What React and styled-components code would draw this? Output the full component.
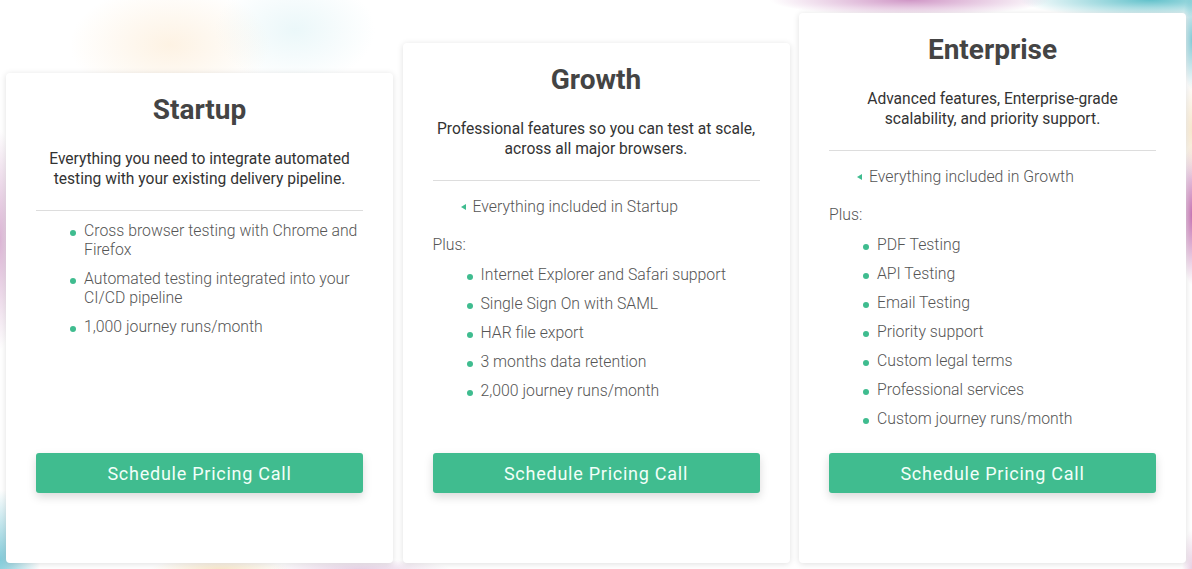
import React from "react";
import styled, { createGlobalStyle } from "styled-components";

const GlobalStyle = createGlobalStyle`
  html, body {
    margin: 0;
    padding: 0;
    background: #fff;
    font-family: Roboto, "Liberation Sans", sans-serif;
  }
`;

const plans = [
  {
    name: "Startup",
    offset: 60,
    description: "Everything you need to integrate automated testing with your existing delivery pipeline.",
    features: [
      "Cross browser testing with Chrome and Firefox",
      "Automated testing integrated into your CI/CD pipeline",
      "1,000 journey runs/month",
    ],
  },
  {
    name: "Growth",
    offset: 30,
    description: "Professional features so you can test at scale, across all major browsers.",
    inherits: "Everything included in Startup",
    features: [
      "Internet Explorer and Safari support",
      "Single Sign On with SAML",
      "HAR file export",
      "3 months data retention",
      "2,000 journey runs/month",
    ],
  },
  {
    name: "Enterprise",
    offset: 0,
    description: "Advanced features, Enterprise-grade scalability, and priority support.",
    inherits: "Everything included in Growth",
    features: [
      "PDF Testing",
      "API Testing",
      "Email Testing",
      "Priority support",
      "Custom legal terms",
      "Professional services",
      "Custom journey runs/month",
    ],
  },
];

const PlanCard = ({ plan }) => (
  <Card offset={plan.offset}>
    <Title>{plan.name}</Title>
    <Description>{plan.description}</Description>
    <Divider />
    {plan.inherits && (
      <>
        <Inherit>{plan.inherits}</Inherit>
        <Plus>Plus:</Plus>
      </>
    )}
    <FeatureList>
      {plan.features.map((f) => (
        <Feature key={f}>{f}</Feature>
      ))}
    </FeatureList>
    <CallButton>Schedule Pricing Call</CallButton>
  </Card>
);

const App = () => (
  <>
    <GlobalStyle />
    <Page>
      <Row>
        {plans.map((p) => (
          <PlanCard key={p.name} plan={p} />
        ))}
      </Row>
    </Page>
  </>
);

const Page = styled.div`
  width: 1192px;
  height: 569px;
  overflow: hidden;
  background:
    radial-gradient(100px 60px at 170px 45px, rgba(252, 232, 205, 0.55), rgba(252, 232, 205, 0) 100%),
    radial-gradient(80px 55px at 295px 30px, rgba(215, 240, 244, 0.5), rgba(215, 240, 244, 0) 100%),
    radial-gradient(16px 110px at 0px 240px, rgba(200, 140, 190, 0.65), rgba(200, 140, 190, 0) 100%),
    radial-gradient(40px 70px at 0px 560px, rgba(110, 195, 212, 0.85), rgba(110, 195, 212, 0) 100%),
    radial-gradient(70px 10px at 220px 569px, rgba(245, 225, 190, 0.8), rgba(245, 225, 190, 0) 100%),
    radial-gradient(90px 10px at 360px 569px, rgba(225, 200, 225, 0.8), rgba(225, 200, 225, 0) 100%),
    radial-gradient(140px 16px at 910px 0px, rgba(205, 145, 195, 0.95), rgba(205, 145, 195, 0) 100%),
    radial-gradient(130px 18px at 1150px 0px, rgba(90, 190, 200, 0.95), rgba(90, 190, 200, 0) 100%),
    radial-gradient(10px 50px at 1192px 40px, rgba(100, 190, 205, 0.8), rgba(100, 190, 205, 0) 100%),
    radial-gradient(10px 50px at 1192px 130px, rgba(245, 225, 190, 0.8), rgba(245, 225, 190, 0) 100%),
    radial-gradient(12px 70px at 1192px 215px, rgba(190, 100, 170, 0.9), rgba(190, 100, 170, 0) 100%),
    radial-gradient(10px 40px at 1192px 569px, rgba(225, 195, 220, 0.8), rgba(225, 195, 220, 0) 100%),
    #fff;
`;

const Row = styled.div`
  display: flex;
  align-items: stretch;
  gap: 9.5px;
  height: 550px;
  padding: 13px 0 0 6px;
`;

const Card = styled.div`
  width: 387px;
  box-sizing: border-box;
  margin-top: ${({ offset }) => offset}px;
  padding: 20px 30px 70px;
  background: #fff;
  border-radius: 4px;
  box-shadow: 0 1px 6px rgba(0, 0, 0, 0.13);
  display: flex;
  flex-direction: column;
  color: #555;
`;

const Title = styled.h2`
  margin: 0;
  font-size: 28px;
  line-height: 34px;
  font-weight: 700;
  color: #444;
  text-align: center;
`;

const Description = styled.p`
  width: 322px;
  margin: 22px auto 0;
  font-size: 15.6px;
  line-height: 20px;
  font-weight: 400;
  color: #333;
  text-align: center;
`;

const Divider = styled.hr`
  margin: 21px 0 0;
  border: none;
  border-top: 1px solid #ddd;
`;

const Inherit = styled.div`
  position: relative;
  margin: 16px 0 0 40px;
  font-size: 15.8px;
  line-height: 20px;
  font-weight: 300;
  &::before {
    content: "";
    position: absolute;
    left: -12px;
    top: 7px;
    border-style: solid;
    border-width: 3px 5px 3px 0;
    border-color: transparent #3fbc8f transparent transparent;
  }
`;

const Plus = styled.div`
  margin-top: 18px;
  font-size: 15.8px;
  line-height: 20px;
  font-weight: 300;
`;

const FeatureList = styled.ul`
  list-style: none;
  margin: 0;
  padding: 0 0 0 48px;
`;

const Feature = styled.li`
  position: relative;
  margin-top: 10px;
  font-size: 15.8px;
  line-height: 19px;
  font-weight: 300;
  &::before {
    content: "";
    position: absolute;
    left: -14px;
    top: 9px;
    width: 6px;
    height: 6px;
    border-radius: 50%;
    background: #3fbc8f;
  }
`;

const CallButton = styled.button`
  margin-top: auto;
  height: 40px;
  border: none;
  border-radius: 3px;
  background: #40bc8f;
  color: #f2fff9;
  font-family: inherit;
  font-size: 18px;
  font-weight: 400;
  letter-spacing: 0.75px;
  box-shadow: 0 4px 10px rgba(0, 0, 0, 0.15);
  cursor: pointer;
`;

export default App;
